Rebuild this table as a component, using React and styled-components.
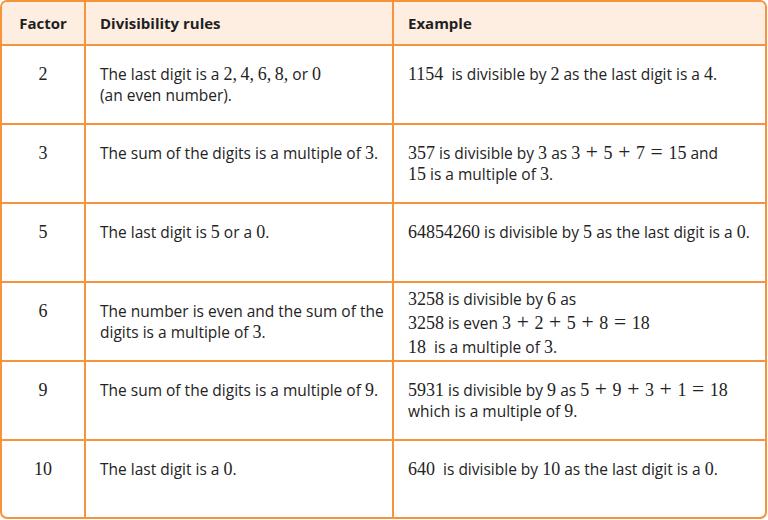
import styled, { createGlobalStyle } from "styled-components";

const ORANGE = "#f7923d";

/* Styled Components */

const GlobalStyle = createGlobalStyle`
  html, body {
    margin: 0;
    padding: 0;
    background: #ffffff;
  }
  body {
    font-family: "Open Sans", Lato, sans-serif;
    color: #222222;
  }
`;

const Table = styled.div`
  box-sizing: border-box;
  width: 767px;
  display: grid;
  grid-template-columns: 84px 308px 1fr;
  grid-template-rows: 44px repeat(5, 79px) 76px;
  border: 2px solid ${ORANGE};
  border-radius: 7px;
  overflow: hidden;
`;

const HeadCell = styled.div`
  box-sizing: border-box;
  background: #feeee2;
  display: flex;
  align-items: center;
  justify-content: ${(p) => (p.$center ? "center" : "flex-start")};
  padding: ${(p) => (p.$center ? "0" : "0 14px")};
  font-size: 15px;
  font-weight: 700;
  color: #1f1f1f;
  border-bottom: 2px solid ${ORANGE};
  border-right: ${(p) => (p.$last ? "none" : `2px solid ${ORANGE}`)};
`;

const Cell = styled.div`
  box-sizing: border-box;
  padding: ${(p) =>
    p.$center ? "18px 0 0 0" : p.$compact ? "4px 6px 0 14px" : "18px 6px 0 14px"};
  text-align: ${(p) => (p.$center ? "center" : "left")};
  font-size: 15.5px;
  line-height: 21px;
  white-space: nowrap;
  color: #232323;
  border-bottom: ${(p) => (p.$bottom ? "none" : `2px solid ${ORANGE}`)};
  border-right: ${(p) => (p.$last ? "none" : `2px solid ${ORANGE}`)};
`;

const Line = styled.div`
  line-height: 24px;
`;

const M = styled.span`
  font-family: "Liberation Serif", "Times New Roman", serif;
  font-size: 18px;
  line-height: 1;
`;

const Op = styled.span`
  font-size: 1.2em;
  line-height: 0;
  margin: 0 0.26em;
`;

const rows = [
  {
    factor: "2",
    rule: (
      <>
        The last digit is a <M>2,&#8201;4,&#8201;6,&#8201;8,</M> or <M>0</M>
        <br />
        (an even number).
      </>
    ),
    example: (
      <>
        <M>1154</M>&nbsp; is divisible by <M>2</M> as the last digit is a <M>4</M>.
      </>
    ),
  },
  {
    factor: "3",
    rule: (
      <>
        The sum of the digits is a multiple of <M>3</M>.
      </>
    ),
    example: (
      <>
        <M>357</M> is divisible by <M>3</M> as{" "}
        <M>
          3<Op>+</Op>5<Op>+</Op>7<Op>=</Op>15
        </M>{" "}
        and
        <br />
        <M>15</M> is a multiple of <M>3</M>.
      </>
    ),
  },
  {
    factor: "5",
    rule: (
      <>
        The last digit is <M>5</M> or a <M>0</M>.
      </>
    ),
    example: (
      <>
        <M>64854260</M> is divisible by <M>5</M> as the last digit is a <M>0</M>.
      </>
    ),
  },
  {
    factor: "6",
    rule: (
      <>
        The number is even and the sum of the
        <br />
        digits is a multiple of <M>3</M>.
      </>
    ),
    compact: true,
    example: (
      <>
        <Line>
          <M>3258</M> is divisible by <M>6</M> as
        </Line>
        <Line>
          <M>3258</M> is even{" "}
          <M>
            3<Op>+</Op>2<Op>+</Op>5<Op>+</Op>8<Op>=</Op>18
          </M>
        </Line>
        <Line>
          <M>18</M>&nbsp; is a multiple of <M>3</M>.
        </Line>
      </>
    ),
  },
  {
    factor: "9",
    rule: (
      <>
        The sum of the digits is a multiple of <M>9</M>.
      </>
    ),
    example: (
      <>
        <M>5931</M> is divisible by <M>9</M> as{" "}
        <M>
          5<Op>+</Op>9<Op>+</Op>3<Op>+</Op>1<Op>=</Op>18
        </M>
        <br />
        which is a multiple of <M>9</M>.
      </>
    ),
  },
  {
    factor: "10",
    rule: (
      <>
        The last digit is a <M>0</M>.
      </>
    ),
    example: (
      <>
        <M>640</M>&nbsp; is divisible by <M>10</M> as the last digit is a <M>0</M>.
      </>
    ),
  },
];

export default function App() {
  return (
    <>
      <GlobalStyle />
      <Table>
        <HeadCell $center>Factor</HeadCell>
        <HeadCell>Divisibility rules</HeadCell>
        <HeadCell $last>Example</HeadCell>
        {rows.map((r, i) => {
          const bottom = i === rows.length - 1;
          return [
            <Cell key={i + "f"} $center $bottom={bottom}>
              <M>{r.factor}</M>
            </Cell>,
            <Cell key={i + "r"} $bottom={bottom}>
              {r.rule}
            </Cell>,
            <Cell key={i + "e"} $last $bottom={bottom} $compact={r.compact}>
              {r.example}
            </Cell>,
          ];
        })}
      </Table>
    </>
  );
}
